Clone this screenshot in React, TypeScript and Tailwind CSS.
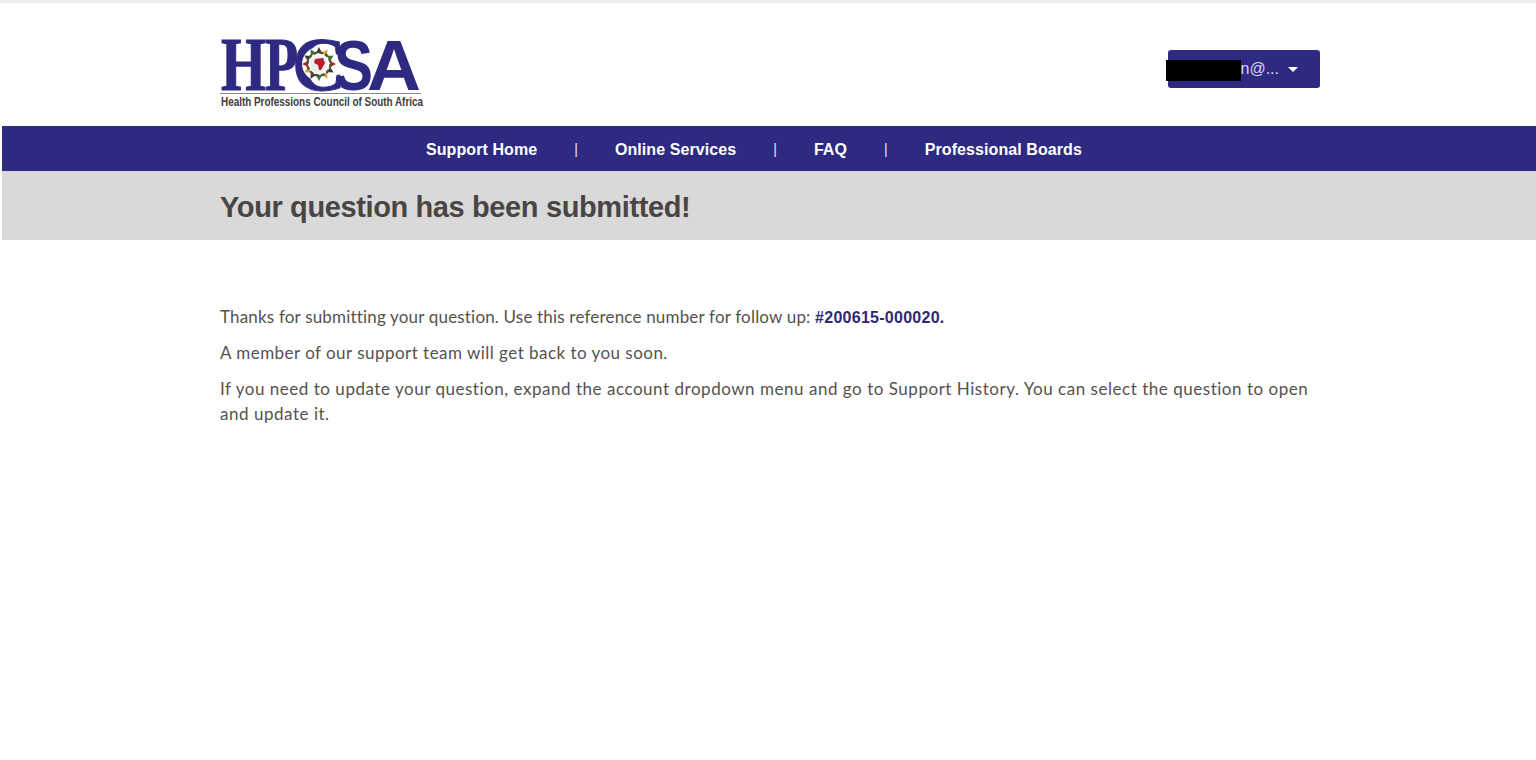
import React from "react";

const navItems = ["Support Home", "Online Services", "FAQ", "Professional Boards"];

const petals = [
  "#3d3a26", "#d9a62b", "#2f7a3a", "#b3202a", "#3d3a26", "#d9a62b", "#2f7a3a", "#3d3a26",
  "#d9a62b", "#b3202a", "#3d3a26", "#2f7a3a",
];

function Logo() {
  const navy = "#2e2a82";
  return (
    <svg width="206" height="72" viewBox="0 0 206 72" className="block" role="img" aria-label="HPCSA">
      <text x="1" y="51" fontFamily="'Liberation Serif', serif" fontSize="76" fontWeight="700" fill={navy} stroke={navy} strokeWidth="1.2" textLength="45" lengthAdjust="spacingAndGlyphs">H</text>
      <text x="45" y="51" fontFamily="'Liberation Serif', serif" fontSize="76" fontWeight="700" fill={navy} stroke={navy} strokeWidth="1.2" textLength="33" lengthAdjust="spacingAndGlyphs">P</text>
      <text x="72" y="51" fontFamily="'Liberation Serif', serif" fontSize="76" fontWeight="700" fill={navy} stroke={navy} strokeWidth="0.8" textLength="54" lengthAdjust="spacingAndGlyphs">C</text>
      <text x="114" y="51" fontFamily="'Liberation Sans', sans-serif" fontSize="70" fontWeight="700" fill={navy} textLength="39" lengthAdjust="spacingAndGlyphs">S</text>
      <text x="147" y="51" fontFamily="'Liberation Sans', sans-serif" fontSize="70" fontWeight="700" fill={navy} textLength="54" lengthAdjust="spacingAndGlyphs">A</text>
      <circle cx="99" cy="25" r="17" fill="#fff" />
      {petals.map((c, i) => (
        <path key={i} d="M96 14 L99 8 L102 14 Z" fill={c} transform={`rotate(${i * 30} 99 25)`} />
      ))}
      <circle cx="99" cy="25" r="11.500" fill="none" stroke="#55553a" strokeWidth="2.500" strokeDasharray="4 2" />
      <circle cx="99" cy="25" r="9" fill="#f1efee" />
      <path d="M95 20 L103 19 L105 24 L101 31 L99 31 L98 26 L94 24 Z" fill="#b3202a" />
      <line x1="0" y1="54.500" x2="201" y2="54.500" stroke="#8b8b8b" strokeWidth="1" />
      <text x="1" y="67" fontFamily="'Liberation Sans', sans-serif" fontSize="12" fontWeight="700" fill="#3c3c3c" textLength="202" lengthAdjust="spacingAndGlyphs">Health Professions Council of South Africa</text>
    </svg>
  );
}

export default function App() {
  return (
    <div className="min-h-[760px] bg-white font-['Liberation_Sans',sans-serif]">
      <div className="h-[3px] bg-[#eeeeee]" />
      <header className="h-[123px] pl-[220px] pr-[216px] flex items-start justify-between">
        <div className="pt-[36px]">
          <Logo />
        </div>
        <div className="mt-[47px] relative w-[152px] h-[38px] rounded-[3px] bg-[#2e2a82] flex items-center justify-end pr-[22px] gap-[9px] text-[16px] text-[#d8d7ee]">
          <span className="pl-[2px]">n@...</span>
          <span className="w-0 h-0 border-x-[5px] border-x-transparent border-t-[5px] border-t-white" />
          <span className="absolute left-[-2px] top-[10px] w-[75px] h-[21px] bg-black" />
        </div>
      </header>
      <div className="pl-[2px]">
        <nav className="h-[45px] bg-[#2e2a82] pl-[424px] pt-[2px] flex items-center text-white font-bold text-[16px] tracking-[0.08px]">
          {navItems.map((item, i) => (
            <React.Fragment key={item}>
              {i > 0 && <span className="mx-[37px] font-normal text-[14px] text-[#e4e3f3]">|</span>}
              <a className="whitespace-nowrap">{item}</a>
            </React.Fragment>
          ))}
        </nav>
        <div className="h-[69px] bg-[#d9d9d9] pl-[218px] pt-[4px] flex items-center">
          <h1 className="text-[29px] leading-none font-bold text-[#4a4545] tracking-[-0.38px]">Your question has been submitted!</h1>
        </div>
      </div>
      <main className="pl-[220px] pr-[220px] pt-[64px] text-[#55524f] text-[17px] leading-[25px] font-['Lato',sans-serif]">
        <p className="mb-[11px] tracking-[0.18px]">
          Thanks for submitting your question. Use this reference number for follow up:{" "}
          <b className="text-[#2e2a72] font-bold font-['Liberation_Sans',sans-serif] text-[16px] leading-none tracking-[0.27px]">#200615-000020.</b>
        </p>
        <p className="mb-[11px] tracking-[0.47px]">A member of our support team will get back to you soon.</p>
        <p className="tracking-[0.53px]">
          If you need to update your question, expand the account dropdown menu and go to Support History. You can select the question to open and update it.
        </p>
      </main>
    </div>
  );
}
